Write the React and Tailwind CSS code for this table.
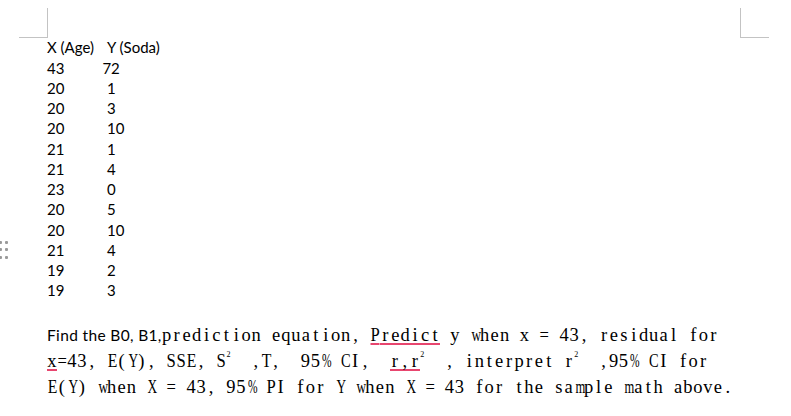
import React from "react";

const rows = [
  ["43", "72"],
  ["20", "1"],
  ["20", "3"],
  ["20", "10"],
  ["21", "1"],
  ["21", "4"],
  ["23", "0"],
  ["20", "5"],
  ["20", "10"],
  ["21", "4"],
  ["19", "2"],
  ["19", "3"],
];

const sans = "font-['Lato','Liberation_Sans',sans-serif]";

// narrow the wide serif glyphs so every character fits one half-width cell
const squeeze = {
  m: "scale-x-[0.68]",
  w: "scale-x-[0.72]",
  "%": "scale-x-[0.62]",
  X: "scale-x-[0.72]",
  Y: "scale-x-[0.72]",
  C: "scale-x-[0.78]",
  E: "scale-x-[0.85]",
  P: "scale-x-[0.9]",
  S: "scale-x-[0.9]",
  T: "scale-x-[0.85]",
  "=": "scale-x-[0.9]",
};

function Cells({ text, u }) {
  return text.split("").map((c, i) => (
    <span
      key={i}
      className={`inline-block w-[9.95px] text-center ${squeeze[c] ?? ""} ${
        u ? "border-b-2 border-[#e8466f] leading-[15px]" : ""
      }`}
    >
      {c === " " ? "\u00a0" : c}
    </span>
  ));
}

function Sup() {
  return (
    <span className="relative -top-[10px] inline-block w-[5px] text-[8px] leading-none text-center">
      2
    </span>
  );
}

const lines = [
  [
    { t: "prediction equation, " },
    { t: "Predict", u: true },
    { t: " y when x = 43, residual for" },
  ],
  [
    { t: "x", u: true },
    { t: "=43, E(Y), SSE, S" },
    { sup: true },
    { t: "  ,T,  95% CI,  " },
    { t: "r,r", u: true },
    { sup: true },
    { t: "  , interpret r" },
    { sup: true },
    { t: "  ,95% CI for" },
  ],
  [{ t: "E(Y) when X = 43, 95% PI for Y when X = 43 for the sample math above." }],
];

export default function App() {
  return (
    <div className="relative w-[791px] h-[416px] bg-white overflow-hidden text-black">
      {/* page corner marks */}
      <div className="absolute left-[19px] top-[8px] w-[29px] h-[30px] border-r border-b border-[#c3c3c3]" />
      <div className="absolute left-[740px] top-[8px] w-[29px] h-[30px] border-l border-b border-[#c3c3c3]" />

      {/* drag handle dots */}
      <div className="absolute left-[-1.5px] top-[240.5px] grid grid-cols-2 gap-x-[3px] gap-y-[4.5px]">
        {Array.from({ length: 6 }).map((_, i) => (
          <div key={i} className="w-[3px] h-[3px] rounded-[1px] bg-[#9a9a9a]" />
        ))}
      </div>

      <div className="pl-[47px] pt-[37.4px]">
        <div className={`${sans} text-[15px] leading-[20.25px]`}>
          <div className="grid grid-cols-[60px_auto]">
            <div>X (Age)</div>
            <div>Y (Soda)</div>
          </div>
          {rows.map(([x, y], i) => (
            <div key={i} className="grid grid-cols-[60px_auto]">
              <div>{x}</div>
              <div className={i === 0 ? "-ml-[4.6px]" : ""}>{y}</div>
            </div>
          ))}
        </div>

        <div className="mt-[21.6px] font-['Liberation_Serif',serif] text-[18.5px] leading-[26px] whitespace-nowrap">
          {lines.map((segs, li) => (
            <div key={li}>
              {li === 0 && (
                <span className={`${sans} text-[15.5px] leading-[20px] tracking-[0.35px]`}>
                  Find the B0, B1,
                </span>
              )}
              {segs.map((s, si) =>
                s.sup ? <Sup key={si} /> : <Cells key={si} text={s.t} u={s.u} />
              )}
            </div>
          ))}
        </div>
      </div>
    </div>
  );
}
